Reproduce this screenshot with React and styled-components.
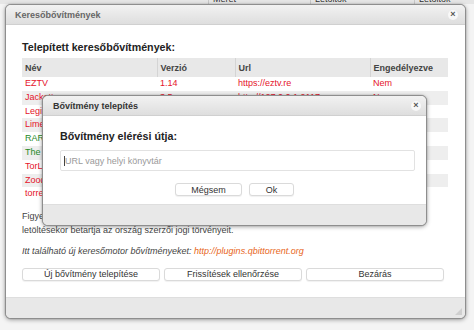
import React from "react";
import styled, { createGlobalStyle } from "styled-components";

const Global = createGlobalStyle`
  html, body { margin: 0; padding: 0; }
  body { font-family: "Liberation Sans", Arial, sans-serif; background: #f4f4f4; }
`;

const FONT = `"Liberation Sans", Arial, sans-serif`;

const Page = styled.div`
  position: relative;
  width: 474px;
  height: 330px;
  overflow: hidden;
  background: #f4f4f4;
  font-family: ${FONT};
`;

const BgHeader = styled.div`
  display: grid;
  grid-template-columns: 208px 102px 104px 1fr;
  height: 4px;
  overflow: hidden;
  background: #e6e6e6;
`;

const BgCell = styled.div`
  margin-top: -6px;
  line-height: 10px;
  font-size: 9px;
  padding-left: 4px;
  color: #333;
  border-left: ${(p) => (p.$first ? "none" : "1px solid #c8c8c8")};
`;

const Window = styled.div`
  position: absolute;
  left: ${(p) => p.$x}px;
  top: ${(p) => p.$y}px;
  width: ${(p) => p.$w}px;
  height: ${(p) => p.$h}px;
  box-sizing: border-box;
  display: flex;
  flex-direction: column;
  background: #fff;
  border: 1px solid #8e8e8e;
  border-radius: 6px;
  box-shadow: 0 1px 4px rgba(0, 0, 0, 0.35), 0 0 1px rgba(0, 0, 0, 0.4);
  overflow: hidden;
`;

const TitleBar = styled.div`
  flex: 0 0 auto;
  height: 19px;
  display: flex;
  align-items: center;
  justify-content: space-between;
  padding: 0 ${(p) => p.$pr}px 0 ${(p) => p.$pl}px;
  background: linear-gradient(#f2f2f2, #dedede);
  border-bottom: 1px solid #d0d0d0;
`;

const Title = styled.span`
  font-size: 9px;
  font-weight: bold;
  color: ${(p) => p.$color};
`;

const Close = styled.span`
  width: 10px;
  height: 10px;
  border-radius: 50%;
  background: rgba(255, 255, 255, 0.7);
  display: flex;
  align-items: center;
  justify-content: center;
  font-size: 9px;
  font-weight: bold;
  line-height: 1;
  color: #555;
`;

const OuterBody = styled.div`
  flex: 1 1 auto;
  padding: 16px 17px 0 16px;
`;

const Heading = styled.div`
  font-size: 10.7px;
  font-weight: bold;
  color: #222;
  line-height: 13px;
`;

const Table = styled.table`
  margin-top: 4px;
  width: 426px;
  border-collapse: collapse;
  table-layout: fixed;
  font-size: 9px;
`;

const Th = styled.th`
  height: 19px;
  padding: 0 0 0 3px;
  text-align: left;
  background: #e8e8e8;
  color: #444;
  font-weight: bold;
  border-left: ${(p) => (p.$first ? "none" : "1px solid #d4d4d4")};
`;

const Tr = styled.tr`
  background: ${(p) => (p.$striped ? "#eeeeee" : "#fff")};
  color: ${(p) => (p.$enabled ? "#1f8a28" : "#e5132b")};
`;

const Td = styled.td`
  height: 13.8px;
  padding: 0 0 0 3px;
  line-height: 13.8px;
  white-space: nowrap;
  overflow: hidden;
`;

const Paragraph = styled.p`
  margin: 8px 0 0;
  font-size: 9px;
  line-height: 14.3px;
  color: #444;
  white-space: nowrap;
`;

const Italic = styled.p`
  margin: 6px 0 0;
  font-size: 9px;
  line-height: 14px;
  font-style: italic;
  color: #444;
`;

const Link = styled.span`
  color: #e8661a;
`;

const ButtonRow = styled.div`
  margin: 10px 4px 0 0;
  display: grid;
  grid-template-columns: repeat(3, 1fr);
  gap: 4px;
`;

const Button = styled.div`
  height: 13px;
  box-sizing: border-box;
  display: flex;
  align-items: center;
  justify-content: center;
  border: 1px solid #dadada;
  border-radius: 3px;
  background: #fff;
  box-shadow: 0 1px 1px rgba(0, 0, 0, 0.06);
  font-size: 9px;
  color: #333;
  width: ${(p) => (p.$w ? `${p.$w}px` : "auto")};
`;

const Footer = styled.div`
  position: relative;
  flex: 0 0 20px;
  background: #e8e8e8;
  border-top: 1px solid #dedede;
`;

const Grip = styled.div`
  position: absolute;
  right: 3px;
  bottom: 3px;
  width: 0;
  height: 0;
  border-left: 7px solid transparent;
  border-bottom: 7px solid #cfcfcf;
`;

const InnerBody = styled.div`
  flex: 1 1 auto;
  padding: 14px 11px 0 17px;
  display: flex;
  flex-direction: column;
`;

const InputBox = styled.div`
  position: relative;
  margin-top: 7px;
  height: 21px;
  box-sizing: border-box;
  border: 1px solid #e2e2e2;
  border-radius: 2px;
  display: flex;
  align-items: center;
  padding-left: 4px;
  font-size: 9px;
  color: #9a9a9a;
`;

const Caret = styled.span`
  position: absolute;
  left: 3px;
  top: 5px;
  width: 1px;
  height: 10px;
  background: #444;
`;

const DialogButtons = styled.div`
  margin-top: 12px;
  display: flex;
  justify-content: center;
  gap: 7px;
  padding-right: 0;
  margin-left: -6px;
`;

const plugins = [
  { name: "EZTV", version: "1.14", url: "https://eztv.re", enabled: false },
  { name: "Jackett", version: "3.5", url: "http://127.0.0.1:9117", enabled: false },
  { name: "LegitTorrents", version: "2.3", url: "http://www.legittorrents.info", enabled: false },
  { name: "LimeTorrents", version: "4.7", url: "https://limetorrents.pro", enabled: false },
  { name: "RARBG", version: "2.14", url: "https://rarbg.to", enabled: true },
  { name: "The Pirate Bay", version: "3.1", url: "https://thepiratebay.org", enabled: true },
  { name: "TorLock", version: "2.21", url: "https://www.torlock.com", enabled: false },
  { name: "Zooqle", version: "1.13", url: "https://zooqle.com", enabled: false },
  { name: "torrentproject", version: "1.2", url: "https://torrentproject2.com", enabled: false },
];

export default function App() {
  return (
    <>
      <Global />
      <Page>
        <BgHeader>
          <BgCell $first />
          <BgCell>Méret</BgCell>
          <BgCell>Letöltők</BgCell>
          <BgCell>Letöltők</BgCell>
        </BgHeader>

        <Window $x={5} $y={4} $w={461} $h={315}>
          <TitleBar $pl={9} $pr={7}>
            <Title $color="#666">Keresőbővítmények</Title>
            <Close>×</Close>
          </TitleBar>
          <OuterBody>
            <Heading>Telepített keresőbővítmények:</Heading>
            <Table>
              <colgroup>
                <col style={{ width: 135 }} />
                <col style={{ width: 78 }} />
                <col style={{ width: 135 }} />
                <col style={{ width: 78 }} />
              </colgroup>
              <thead>
                <tr>
                  <Th $first>Név</Th>
                  <Th>Verzió</Th>
                  <Th>Url</Th>
                  <Th>Engedélyezve</Th>
                </tr>
              </thead>
              <tbody>
                {plugins.map((p, i) => (
                  <Tr key={p.name} $striped={i % 2 === 1} $enabled={p.enabled}>
                    <Td>{p.name}</Td>
                    <Td>{p.version}</Td>
                    <Td>{p.url}</Td>
                    <Td>{p.enabled ? "Igen" : "Nem"}</Td>
                  </Tr>
                ))}
              </tbody>
            </Table>
            <Paragraph>
              Figyelem: Győződjön meg róla, hogy bármely keresőmotorról származó torrentek
              <br />
              letöltésekor betartja az ország szerzői jogi törvényeit.
            </Paragraph>
            <Italic>
              Itt található új keresőmotor bővítményeket: <Link>http://plugins.qbittorrent.org</Link>
            </Italic>
            <ButtonRow>
              <Button>Új bővítmény telepítése</Button>
              <Button>Frissítések ellenőrzése</Button>
              <Button>Bezárás</Button>
            </ButtonRow>
          </OuterBody>
          <Footer>
            <Grip />
          </Footer>
        </Window>

        <Window $x={42} $y={95} $w={385} $h={131}>
          <TitleBar $pl={10} $pr={5}>
            <Title $color="#333">Bővítmény telepítés</Title>
            <Close>×</Close>
          </TitleBar>
          <InnerBody>
            <Heading>Bővítmény elérési útja:</Heading>
            <InputBox>
              <Caret />
              URL vagy helyi könyvtár
            </InputBox>
            <DialogButtons>
              <Button $w={67}>Mégsem</Button>
              <Button $w={45}>Ok</Button>
            </DialogButtons>
          </InnerBody>
          <Footer />
        </Window>
      </Page>
    </>
  );
}
